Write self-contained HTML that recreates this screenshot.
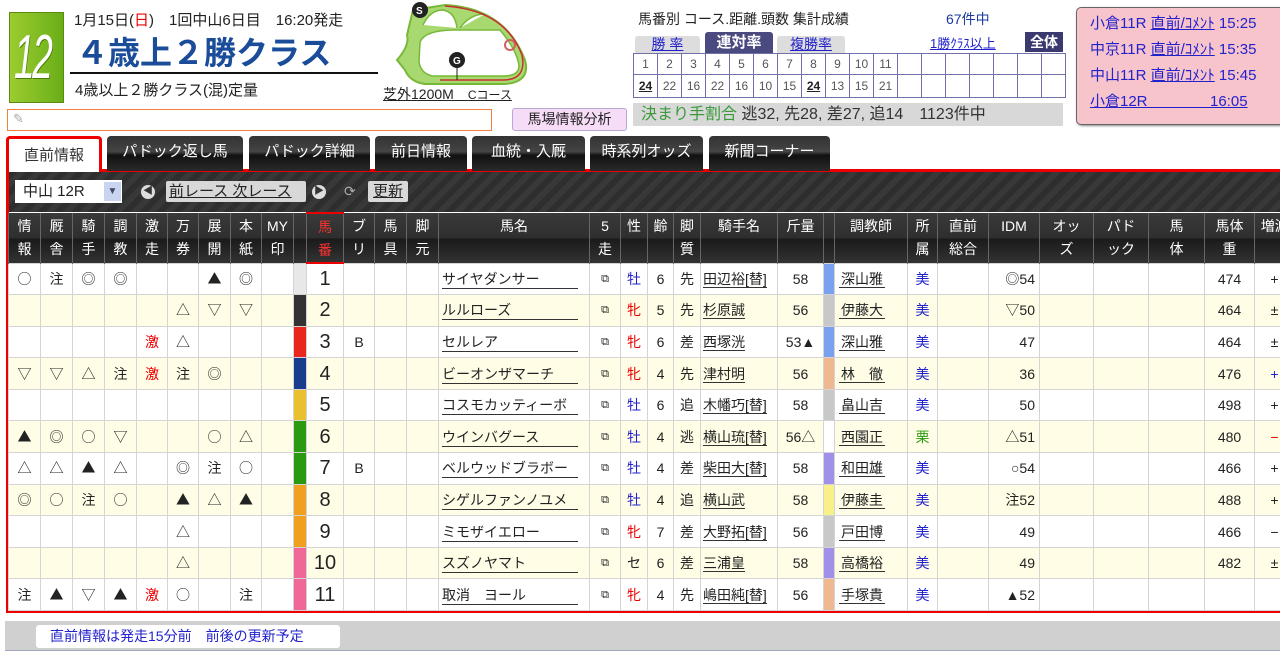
<!DOCTYPE html>
<html><head><meta charset="utf-8">
<style>
*{margin:0;padding:0;box-sizing:border-box}
body{width:1280px;height:670px;overflow:hidden;background:#fff;font-family:"Liberation Sans","Noto Sans CJK JP",sans-serif;color:#222;position:relative}
.a{position:absolute;white-space:nowrap}
a,.u{text-decoration:underline}
.tab{position:absolute;top:136px;height:35px;background:linear-gradient(#333,#444 45%,#111 55%,#2a2a2a);color:#fff;font-size:15px;text-align:center;line-height:31px;border-radius:4px 4px 0 0}
table{position:absolute;border-collapse:collapse;table-layout:fixed;font-size:14px}
#main{left:8px;top:212px;width:1286px}
th{background:linear-gradient(#3a3a3a,#2e2e2e 50%,#1a1a1a 52%,#333);color:#fff;font-weight:normal;height:50px;border-left:1px solid #666;line-height:23px;padding-top:2px;vertical-align:top;font-size:14px}
#main td{height:31.6px;border:1px solid #d4d4d4;text-align:center;padding:0;line-height:20px}
#main td:nth-child(-n+8){font-family:"Noto Sans CJK JP",sans-serif;font-size:14px}
#main tr.c td{background:#fffde6}
#main td.n{font-size:20px}
#main td.nm{text-align:left;padding-left:3px}
td.nm span{display:inline-block;width:136px;border-bottom:1.5px solid #333;line-height:18px;font-size:14px}
#main td.tr{text-align:left;padding-left:4px}
td.tr span{border-bottom:1.5px solid #333;padding:0 2px}
.m{color:#22c}.f{color:#e00}
#main td.r{text-align:right;padding-right:4px}
#main td.ic{font-size:11px}
#grid{left:633px;top:53px;width:433px;font-size:12px;color:#555;border:1px solid #7070a8}
#grid td{border:1px solid #7070a8;text-align:center;padding:0;line-height:16px;overflow:hidden}
</style></head><body>

<div class="a" style="left:9px;top:12px;width:55px;height:91px;background:linear-gradient(90deg,#9ccc30,#6aae18);border:1px solid #5a8a10"></div>
<div class="a" style="left:14px;top:18px;font-size:62px;color:#fff;font-style:italic;transform:scaleX(0.6);transform-origin:left;letter-spacing:-4px;line-height:80px;text-shadow:1px 1px 0 #4a7a08">12</div>
<div class="a" style="left:74px;top:9px;font-size:15px">1月15日(<span style="color:#e00">日</span>)　1回中山6日目　16:20発走</div>
<div class="a" style="left:76px;top:28px;font-size:32px;font-weight:bold;color:#1a4c9a">４歳上２勝クラス</div>
<div class="a" style="left:70px;top:72px;width:308px;height:2px;background:#111"></div>
<div class="a" style="left:75px;top:79px;font-size:15px">4歳以上２勝クラス(混)定量</div>

<svg class="a" style="left:385px;top:0" width="150" height="92" viewBox="0 0 150 92">
<path d="M28 10 L60 5 Q120 8 140 60 Q146 82 120 84 L40 84 Q25 82 20 70 L12 60 Q25 45 22 35 Z" fill="#a8d870" stroke="#78b838" stroke-width="2"/>
<path d="M35 42 Q40 30 70 30 L115 30 Q132 50 134 66 Q134 76 118 76 L48 76 Q36 74 34 62 Z" fill="#fff" stroke="#78b838" stroke-width="1.5"/>
<path d="M38 25 Q45 10 58 10 Q70 12 72 28 M75 28 Q85 14 100 14" fill="#fff" stroke="#78b838" stroke-width="1.5"/>
<path d="M60 6 Q120 10 137 55 Q142 80 118 80 L55 80" fill="none" stroke="#c83030" stroke-width="1.5"/>
<circle cx="125" cy="45" r="5" fill="none" stroke="#d06060" stroke-width="2"/>
<circle cx="35" cy="10" r="8" fill="#222"/><text x="31" y="14" font-size="10" fill="#fff" font-weight="bold">S</text>
<line x1="72" y1="62" x2="72" y2="80" stroke="#222"/>
<circle cx="72" cy="60" r="8" fill="#222"/><text x="68" y="64" font-size="10" fill="#fff" font-weight="bold">G</text>
</svg>
<div class="a u" style="left:383px;top:84px;font-size:14px">芝外1200M　<span style="font-size:12px">Cコース</span></div>

<div class="a" style="left:7px;top:109px;width:485px;height:22px;border:1px solid #f08040"></div>
<div class="a" style="left:13px;top:111px;font-size:13px;color:#aaa">✎</div>
<div class="a" style="left:512px;top:108px;width:115px;height:23px;background:#f6dcf6;border:1px solid #b8a8d8;border-radius:3px;font-size:14px;text-align:center;line-height:21px">馬場情報分析</div>

<div class="a" style="left:638px;top:9px;font-size:14px">馬番別 コース.距離.頭数 集計成績</div>
<div class="a" style="left:946px;top:9px;font-size:14px;color:#1a3aa0">67件中</div>
<div class="a" style="left:635px;top:36px;width:65px;height:17px;background:#ddd;border-radius:3px 3px 0 0;font-size:14px;text-align:center;line-height:17px"><a style="color:#22c">勝 率</a></div>
<div class="a" style="left:705px;top:32px;width:68px;height:21px;background:#4a4a80;border-radius:3px 3px 0 0;font-size:15px;color:#fff;text-align:center;line-height:21px;font-weight:bold">連対率</div>
<div class="a" style="left:777px;top:36px;width:68px;height:17px;background:#ddd;border-radius:3px 3px 0 0;font-size:14px;text-align:center;line-height:17px"><a style="color:#22c">複勝率</a></div>
<div class="a u" style="left:930px;top:33px;font-size:13px;color:#22c">1勝ｸﾗｽ以上</div>
<div class="a" style="left:1025px;top:32px;width:38px;height:20px;background:#3a3a70;color:#fff;font-size:14px;font-weight:bold;text-align:center;line-height:20px">全体</div>
<table id="grid">
<tr style="height:21px"><td>1</td><td>2</td><td>3</td><td>4</td><td>5</td><td>6</td><td>7</td><td>8</td><td>9</td><td>10</td><td>11</td><td></td><td></td><td></td><td></td><td></td><td></td><td></td></tr>
<tr style="height:23px"><td class="u" style="color:#222"><b>24</b></td><td>22</td><td>16</td><td>22</td><td>16</td><td>10</td><td>15</td><td class="u" style="color:#222"><b>24</b></td><td>13</td><td>15</td><td>21</td><td></td><td></td><td></td><td></td><td></td><td></td><td></td></tr>
</table>
<div class="a" style="left:633px;top:103px;width:430px;height:23px;background:#d8d8d8;font-size:16px;line-height:23px;padding-left:8px;color:#333"><span style="color:#3a9a3a">決まり手割合</span> 逃32, 先28, 差27, 追14　1123件中</div>

<div class="a" style="left:1076px;top:7px;width:220px;height:118px;background:#f8c4cc;border:1px solid #666;border-radius:5px;box-shadow:1px 1px 2px #888"></div>
<div class="a" style="left:1090px;top:11px;font-size:15px;color:#22c;line-height:26px">小倉11R <a>直前/ｺﾒﾝﾄ</a> 15:25<br>中京11R <a>直前/ｺﾒﾝﾄ</a> 15:35<br>中山11R <a>直前/ｺﾒﾝﾄ</a> 15:45<br><a>小倉12R&nbsp;&nbsp;&nbsp;&nbsp;&nbsp;&nbsp;&nbsp;&nbsp;&nbsp;&nbsp;&nbsp;&nbsp;&nbsp;&nbsp;&nbsp;16:05</a></div>

<div class="a" style="left:6px;top:169px;width:1280px;height:3px;background:#e00"></div>
<div class="a" style="left:6px;top:136px;width:96px;height:36px;background:#fff;border:3px solid #e00;border-bottom:none;border-radius:4px 4px 0 0;font-size:15px;text-align:center;line-height:34px;color:#333">直前情報</div>
<div class="tab" style="left:107px;width:136px">パドック返し馬</div>
<div class="tab" style="left:249px;width:121px">パドック詳細</div>
<div class="tab" style="left:375px;width:92px">前日情報</div>
<div class="tab" style="left:472px;width:113px">血統・入厩</div>
<div class="tab" style="left:590px;width:113px">時系列オッズ</div>
<div class="tab" style="left:709px;width:121px">新聞コーナー</div>

<div class="a" style="left:6px;top:172px;width:1280px;height:441px;border:3px solid #e00;border-right:none"></div>
<div class="a" style="left:9px;top:172px;width:1271px;height:40px;background:repeating-linear-gradient(135deg,#2e2e2e 0 6px,#383838 6px 12px)"></div>
<div class="a" style="left:15px;top:180px;width:107px;height:23px;background:#fff;font-size:15px;line-height:23px;padding-left:8px">中山 12R<span style="position:absolute;right:1px;top:2px;width:17px;height:19px;background:#c8d4f0;font-size:10px;text-align:center;line-height:19px;color:#446">▼</span></div>
<div class="a" style="left:141px;top:185px;width:14px;height:14px;border-radius:50%;background:#ddd;font-size:10px;text-align:center;line-height:14px;color:#333">◀</div>
<div class="a u" style="left:166px;top:181px;width:140px;height:21px;background:#d8d8d8;font-size:15px;line-height:21px;padding-left:3px;border-radius:2px">前レース 次レース</div>
<div class="a" style="left:312px;top:185px;width:14px;height:14px;border-radius:50%;background:#ddd;font-size:10px;text-align:center;line-height:14px;color:#333">▶</div>
<div class="a" style="left:344px;top:183px;font-size:14px;color:#aaa">⟳</div>
<div class="a u" style="left:368px;top:181px;width:40px;height:21px;background:#d8d8d8;font-size:15px;line-height:21px;text-align:center;border-radius:2px">更新</div>

<table id="main">
<colgroup><col style="width:32px"><col style="width:32px"><col style="width:32px"><col style="width:32px"><col style="width:31px"><col style="width:31px"><col style="width:32px"><col style="width:31px"><col style="width:32px"><col style="width:13px"><col style="width:37px"><col style="width:31px"><col style="width:32px"><col style="width:32px"><col style="width:151px"><col style="width:31px"><col style="width:27px"><col style="width:26px"><col style="width:27px"><col style="width:77px"><col style="width:46px"><col style="width:11px"><col style="width:73px"><col style="width:30px"><col style="width:51px"><col style="width:51px"><col style="width:54px"><col style="width:55px"><col style="width:56px"><col style="width:50px"><col style="width:40px"></colgroup>
<tr><th>情<br>報</th><th>厩<br>舎</th><th>騎<br>手</th><th>調<br>教</th><th>激<br>走</th><th>万<br>券</th><th>展<br>開</th><th>本<br>紙</th><th>MY<br>印</th><th></th><th style="color:#f33;border-top:2px solid #e00;border-bottom:2px solid #e00">馬<br>番</th><th>ブ<br>リ</th><th>馬<br>具</th><th>脚<br>元</th><th>馬名</th><th>5<br>走</th><th>性</th><th>齢</th><th>脚<br>質</th><th>騎手名</th><th>斤量</th><th></th><th>調教師</th><th>所<br>属</th><th>直前<br>総合</th><th>IDM</th><th>オッ<br>ズ</th><th>パド<br>ック</th><th>馬<br>体</th><th>馬体<br>重</th><th>増減</th></tr>

<tr><td>○</td><td>注</td><td>◎</td><td>◎</td><td></td><td></td><td>▲</td><td>◎</td><td></td><td style="background:#e8e8e8"></td><td class="n">1</td><td></td><td></td><td></td><td class="nm"><span>サイヤダンサー</span></td><td class="ic">⧉</td><td class="m">牡</td><td>6</td><td>先</td><td class="tr" style="padding-left:2px"><span style="padding:0">田辺裕[替]</span></td><td>58</td><td style="background:#7aa0f0"></td><td class="tr"><span>深山雅</span></td><td class="m">美</td><td></td><td class="r">◎54</td><td></td><td></td><td></td><td>474</td><td>+</td></tr>
<tr class="c"><td></td><td></td><td></td><td></td><td></td><td>△</td><td>▽</td><td>▽</td><td></td><td style="background:#333!important"></td><td class="n">2</td><td></td><td></td><td></td><td class="nm"><span>ルルローズ</span></td><td class="ic">⧉</td><td class="f">牝</td><td>5</td><td>先</td><td class="tr" style="padding-left:2px"><span style="padding:0">杉原誠</span></td><td>56</td><td style="background:#c8c8c8!important"></td><td class="tr"><span>伊藤大</span></td><td class="m">美</td><td></td><td class="r">▽50</td><td></td><td></td><td></td><td>464</td><td>±</td></tr>
<tr><td></td><td></td><td></td><td></td><td class="f">激</td><td>△</td><td></td><td></td><td></td><td style="background:#e8281e"></td><td class="n">3</td><td>B</td><td></td><td></td><td class="nm"><span>セルレア</span></td><td class="ic">⧉</td><td class="f">牝</td><td>6</td><td>差</td><td class="tr" style="padding-left:2px"><span style="padding:0">西塚洸</span></td><td>53▲</td><td style="background:#7aa0f0"></td><td class="tr"><span>深山雅</span></td><td class="m">美</td><td></td><td class="r">47</td><td></td><td></td><td></td><td>464</td><td>±</td></tr>
<tr class="c"><td>▽</td><td>▽</td><td>△</td><td>注</td><td class="f">激</td><td>注</td><td>◎</td><td></td><td></td><td style="background:#1a3c8c!important"></td><td class="n">4</td><td></td><td></td><td></td><td class="nm"><span>ビーオンザマーチ</span></td><td class="ic">⧉</td><td class="f">牝</td><td>4</td><td>先</td><td class="tr" style="padding-left:2px"><span style="padding:0">津村明</span></td><td>56</td><td style="background:#f0b890!important"></td><td class="tr"><span>林　徹</span></td><td class="m">美</td><td></td><td class="r">36</td><td></td><td></td><td></td><td>476</td><td class="m">+</td></tr>
<tr><td></td><td></td><td></td><td></td><td></td><td></td><td></td><td></td><td></td><td style="background:#e8c030"></td><td class="n">5</td><td></td><td></td><td></td><td class="nm"><span>コスモカッティーボ</span></td><td class="ic">⧉</td><td class="m">牡</td><td>6</td><td>追</td><td class="tr" style="padding-left:2px"><span style="padding:0">木幡巧[替]</span></td><td>58</td><td style="background:#c8c8c8"></td><td class="tr"><span>畠山吉</span></td><td class="m">美</td><td></td><td class="r">50</td><td></td><td></td><td></td><td>498</td><td>+</td></tr>
<tr class="c"><td>▲</td><td>◎</td><td>○</td><td>▽</td><td></td><td></td><td>○</td><td>△</td><td></td><td style="background:#2a9a10!important"></td><td class="n">6</td><td></td><td></td><td></td><td class="nm"><span>ウインバグース</span></td><td class="ic">⧉</td><td class="m">牡</td><td>4</td><td>逃</td><td class="tr" style="padding-left:2px"><span style="padding:0">横山琉[替]</span></td><td>56△</td><td style="background:#fff!important"></td><td class="tr"><span>西園正</span></td><td style="color:#2a9a10">栗</td><td></td><td class="r">△51</td><td></td><td></td><td></td><td>480</td><td class="f">−</td></tr>
<tr><td>△</td><td>△</td><td>▲</td><td>△</td><td></td><td>◎</td><td>注</td><td>○</td><td></td><td style="background:#2a9a10"></td><td class="n">7</td><td>B</td><td></td><td></td><td class="nm"><span>ベルウッドブラボー</span></td><td class="ic">⧉</td><td class="m">牡</td><td>4</td><td>差</td><td class="tr" style="padding-left:2px"><span style="padding:0">柴田大[替]</span></td><td>58</td><td style="background:#a090e8"></td><td class="tr"><span>和田雄</span></td><td class="m">美</td><td></td><td class="r">○54</td><td></td><td></td><td></td><td>466</td><td>+</td></tr>
<tr class="c"><td>◎</td><td>○</td><td>注</td><td>○</td><td></td><td>▲</td><td>△</td><td>▲</td><td></td><td style="background:#f0a020!important"></td><td class="n">8</td><td></td><td></td><td></td><td class="nm"><span>シゲルファンノユメ</span></td><td class="ic">⧉</td><td class="m">牡</td><td>4</td><td>追</td><td class="tr" style="padding-left:2px"><span style="padding:0">横山武</span></td><td>58</td><td style="background:#f8f088!important"></td><td class="tr"><span>伊藤圭</span></td><td class="m">美</td><td></td><td class="r">注52</td><td></td><td></td><td></td><td>488</td><td>+</td></tr>
<tr><td></td><td></td><td></td><td></td><td></td><td>△</td><td></td><td></td><td></td><td style="background:#f0a020"></td><td class="n">9</td><td></td><td></td><td></td><td class="nm"><span>ミモザイエロー</span></td><td class="ic">⧉</td><td class="f">牝</td><td>7</td><td>差</td><td class="tr" style="padding-left:2px"><span style="padding:0">大野拓[替]</span></td><td>56</td><td style="background:#c8c8c8"></td><td class="tr"><span>戸田博</span></td><td class="m">美</td><td></td><td class="r">49</td><td></td><td></td><td></td><td>466</td><td>−</td></tr>
<tr class="c"><td></td><td></td><td></td><td></td><td></td><td>△</td><td></td><td></td><td></td><td style="background:#f06898!important"></td><td class="n">10</td><td></td><td></td><td></td><td class="nm"><span>スズノヤマト</span></td><td class="ic">⧉</td><td>セ</td><td>6</td><td>差</td><td class="tr" style="padding-left:2px"><span style="padding:0">三浦皇</span></td><td>58</td><td style="background:#a090e8!important"></td><td class="tr"><span>高橋裕</span></td><td class="m">美</td><td></td><td class="r">49</td><td></td><td></td><td></td><td>482</td><td>±</td></tr>
<tr><td>注</td><td>▲</td><td>▽</td><td>▲</td><td class="f">激</td><td>○</td><td></td><td>注</td><td></td><td style="background:#f06898"></td><td class="n">11</td><td></td><td></td><td></td><td class="nm"><span>取消　ヨール</span></td><td class="ic">⧉</td><td class="f">牝</td><td>4</td><td>先</td><td class="tr" style="padding-left:2px"><span style="padding:0">嶋田純[替]</span></td><td>56</td><td style="background:#f0b890"></td><td class="tr"><span>手塚貴</span></td><td class="m">美</td><td></td><td class="r">▲52</td><td></td><td></td><td></td><td></td><td></td></tr>
</table>

<div class="a" style="left:5px;top:621px;width:1280px;height:30px;background:#d0d0d0;border-bottom:1px solid #a0a8c0"></div>
<div class="a" style="left:36px;top:625px;width:304px;height:23px;background:#fff;border-radius:3px;font-size:14px;color:#22c;line-height:23px;padding-left:14px">直前情報は発走15分前　前後の更新予定</div>
</body></html>
